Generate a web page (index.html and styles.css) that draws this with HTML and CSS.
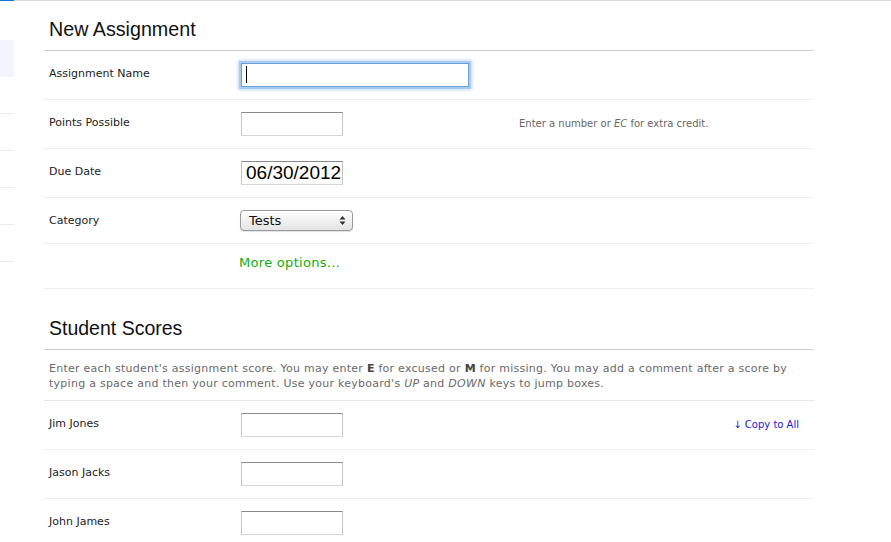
FILE: index.html
```html
<!DOCTYPE html>
<html>
<head>
<meta charset="utf-8">
<link rel="stylesheet" href="styles.css">
</head>
<body>
<div class="app">
  <div class="sidebar">
    <div class="side-item active"></div>
    <div class="side-item"></div>
    <div class="side-item"></div>
    <div class="side-item"></div>
    <div class="side-item"></div>
    <div class="side-item"></div>
  </div>
  <div class="main">
    <div class="content">
      <h2 class="section-title">New Assignment</h2>
      <div class="row">
        <div class="label">Assignment Name</div>
        <div class="field">
          <span class="focus-wrap"><input class="text wide focused" type="text"><span class="caret"></span></span>
        </div>
        <div class="hint"></div>
      </div>
      <div class="row">
        <div class="label">Points Possible</div>
        <div class="field"><input class="text" type="text"></div>
        <div class="hint">Enter a number or <em>EC</em> for extra credit.</div>
      </div>
      <div class="row">
        <div class="label">Due Date</div>
        <div class="field"><input class="text date" type="text" value="06/30/2012"></div>
        <div class="hint"></div>
      </div>
      <div class="row short">
        <div class="label">Category</div>
        <div class="field">
          <div class="select">
            <span class="select-text">Tests</span>
            <svg class="arrows" width="7" height="11" viewBox="0 0 7 11"><path d="M3.5 1 L6.5 4.5 L0.5 4.5 Z M3.5 10 L6.5 6.5 L0.5 6.5 Z" fill="#333"/></svg>
          </div>
        </div>
        <div class="hint"></div>
      </div>
      <div class="row shorter">
        <div class="label"></div>
        <div class="field"><a class="more" href="#">More options...</a></div>
        <div class="hint"></div>
      </div>

      <h2 class="section-title second">Student Scores</h2>
      <p class="desc">Enter each student's assignment score. You may enter <b>E</b> for excused or <b>M</b> for missing. You may add a comment after a score by<br>typing a space and then your comment. Use your keyboard's <em>UP</em> and <em>DOWN</em> keys to jump boxes.</p>
      <div class="row">
        <div class="label">Jim Jones</div>
        <div class="field"><input class="text" type="text"></div>
        <div class="action"><a class="copy" href="#">↓ Copy to All</a></div>
      </div>
      <div class="row">
        <div class="label">Jason Jacks</div>
        <div class="field"><input class="text" type="text"></div>
        <div class="action"></div>
      </div>
      <div class="row">
        <div class="label">John James</div>
        <div class="field"><input class="text" type="text"></div>
        <div class="action"></div>
      </div>
    </div>
  </div>
</div>
</body>
</html>
```
FILE: styles.css
```css
html, body {
  margin: 0;
  padding: 0;
  background: #fff;
  overflow: hidden;
}
body {
  font-family: "DejaVu Sans", Verdana, sans-serif;
  font-size: 11px;
  color: #222;
}
.app {
  display: flex;
  align-items: flex-start;
  height: 542px;
}
.sidebar {
  width: 14px;
  flex: 0 0 14px;
  border-top: 1px solid #1a73d9;
  padding-top: 39px;
}
.side-item {
  height: 36px;
  border-bottom: 1px solid #ececec;
}
.side-item.active {
  height: 37px;
  background: #f3f4fd;
  border-bottom: none;
}
.main {
  flex: 1;
  border-top: 1px solid #dcdcdc;
}
.content {
  width: 770px;
  margin-left: 30px;
}
.section-title {
  margin: 0;
  padding: 16px 0 9px 5px;
  font-family: "Liberation Sans", Arial, sans-serif;
  font-weight: normal;
  font-size: 19.7px;
  line-height: 24px;
  color: #111;
  border-bottom: 1px solid #cfcfcf;
}
.section-title.second {
  margin-top: 11px;
  font-size: 19.5px;
}
.row {
  display: grid;
  grid-template-columns: 197px 278px 1fr;
  align-items: center;
  height: 48px;
  border-bottom: 1px solid #efefef;
}
.row.short { height: 45px; }
.row.shorter { height: 44px; }
.label {
  padding-left: 5px;
  margin-top: -3px;
}
.row.short .label {
  margin-top: -1px;
}
.field {
  display: flex;
  align-items: center;
}
.text {
  box-sizing: border-box;
  width: 102px;
  height: 24px;
  margin: 0;
  padding: 0 4px;
  border: 1px solid #c4c4c4;
  border-top-color: #8a8a8a;
  border-bottom-color: #d6d6d6;
  background: #fff;
  font-family: "Liberation Sans", Arial, sans-serif;
  font-size: 13px;
  outline: none;
}
.text.wide {
  width: 228px;
}
.text.focused {
  border: 1px solid #6a9fd8;
  box-shadow: 0 0 0 2px #a9cbef, 0 0 3px 3px rgba(140,185,235,0.5);
}
.focus-wrap {
  position: relative;
  display: inline-block;
  height: 24px;
}
.caret {
  position: absolute;
  left: 5px;
  top: 3px;
  width: 1px;
  height: 17px;
  background: #000;
}
.text.date {
  font-size: 19px;
  padding: 0 0 0 4px;
  color: #000;
}
.select {
  box-sizing: border-box;
  width: 113px;
  height: 21px;
  margin-left: -1px;
  border: 1px solid #9a9a9a;
  border-radius: 4px;
  background: linear-gradient(#ffffff, #f1f1f1 50%, #e4e4e4);
  display: flex;
  align-items: center;
  justify-content: space-between;
  padding: 0 6px 0 8px;
  box-shadow: 0 1px 1px rgba(0,0,0,0.12);
}
.select-text {
  font-family: "DejaVu Sans", Verdana, sans-serif;
  font-size: 13px;
  color: #111;
  margin-top: -1px;
}
.arrows {
  display: block;
}
.more {
  color: #10ad10;
  text-decoration: none;
  font-size: 13px;
  letter-spacing: 0.3px;
  margin-left: -2px;
  margin-top: -8px;
}
.hint {
  color: #666;
  font-size: 10px;
  margin-top: -2px;
}
.hint em, .desc em {
  font-style: italic;
}
.desc {
  margin: 0;
  padding: 11px 0 9px 5px;
  line-height: 15px;
  letter-spacing: 0.26px;
  color: #6a6a6a;
  border-bottom: 1px solid #e6e6e6;
  white-space: nowrap;
}
.desc b {
  color: #444;
}
.action {
  text-align: right;
  padding-right: 15px;
  margin-top: -2px;
  font-size: 10px;
}
.copy {
  color: #1a1ad0;
  text-decoration: none;
}
```
